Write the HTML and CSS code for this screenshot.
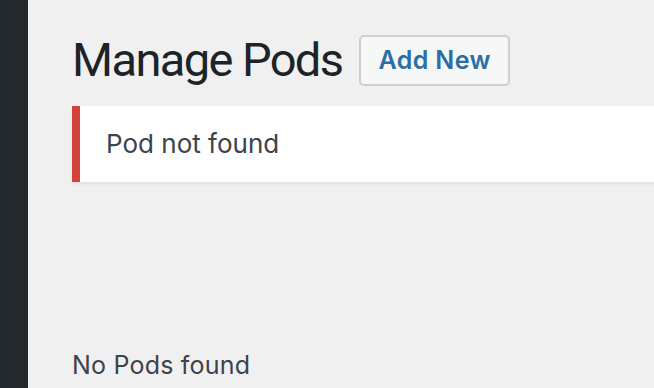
FILE: index.html
```html
<!DOCTYPE html>
<html lang="en">
<head>
<meta charset="utf-8">
<title>Manage Pods</title>
<link rel="stylesheet" href="styles.css">
</head>
<body>
<div class="layout">
  <aside class="sidebar"></aside>
  <main class="content">
    <div class="title-row">
      <h1 class="title">Manage Pods</h1>
      <a class="add-new" href="#">Add New</a>
    </div>
    <div class="notice notice-error">
      <p>Pod not found</p>
    </div>
    <p class="empty">No Pods found</p>
  </main>
</div>
</body>
</html>
```
FILE: styles.css
```css
html, body {
  margin: 0;
  padding: 0;
  height: 100%;
}
body {
  background: #f0f0f1;
  font-family: Inter, "Noto Sans", "Liberation Sans", sans-serif;
  color: #3c434a;
  overflow: hidden;
}
.layout {
  display: flex;
  min-height: 100%;
}
.sidebar {
  flex: 0 0 28px;
  background: #22282c;
}
.content {
  flex: 1;
  padding: 30px 0 0 44px;
  overflow: hidden;
}
.title-row {
  display: flex;
  align-items: center;
  gap: 17px;
}
.title {
  margin: 0;
  font-family: Roboto, Inter, sans-serif;
  font-size: 47px;
  font-weight: 400;
  line-height: 60px;
  color: #1d2327;
  letter-spacing: -1.6px;
}
.add-new {
  display: flex;
  align-items: center;
  box-sizing: border-box;
  height: 51px;
  padding: 0 17px;
  border: 2px solid #cfcfd1;
  border-radius: 5px;
  background: #f6f7f7;
  color: #2a6ea8;
  font-size: 25px;
  font-weight: 600;
  letter-spacing: 0.4px;
  text-decoration: none;
}
.notice {
  margin: 16px -20px 0 0;
  background: #fff;
  border-left: 8px solid #d0443a;
  box-shadow: 0 2px 3px rgba(0, 0, 0, 0.06);
  padding: 20px 26px;
}
.notice p {
  margin: 0;
  font-size: 26px;
  line-height: 36px;
}
.empty {
  margin: 166px 0 0 0;
  font-size: 25px;
  line-height: 34px;
  letter-spacing: 0.2px;
}
```
